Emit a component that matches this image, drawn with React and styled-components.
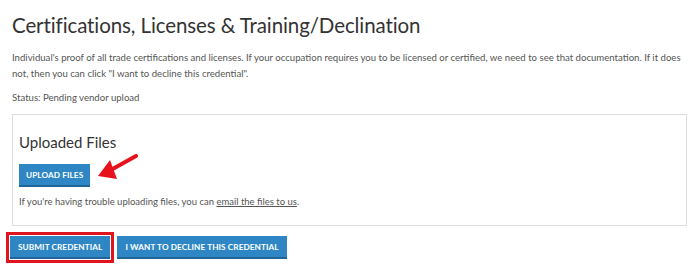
import React from "react";
import styled, { createGlobalStyle } from "styled-components";

const Global = createGlobalStyle`
  html, body { margin: 0; padding: 0; background: #fff; }
  body { font-family: "Lato", "Noto Sans", sans-serif; color: #444; }
`;

const Page = styled.div`
  width: 689px;
  height: 268px;
  box-sizing: border-box;
  padding: 12px 0 0 12px;
  overflow: hidden;
`;

const Title = styled.h1`
  margin: 0;
  font-size: 20.5px;
  font-weight: 400;
  color: #333;
  line-height: 26px;
  letter-spacing: -0.1px;
`;

const Para = styled.p`
  margin: ${(p) => p.$mt || 0}px 0 0;
  font-size: 9.6px;
  line-height: 16px;
  color: #555;
  letter-spacing: 0;
`;

const Panel = styled.section`
  margin-top: 8px;
  border: 1px solid #ddd;
  padding: 16px 6px 12px;
  height: 112px;
  box-sizing: border-box;
  width: 675px;
`;

const PanelTitle = styled.h2`
  margin: 0;
  font-size: 15px;
  font-weight: 400;
  color: #333;
  line-height: 22px;
`;

const UploadRow = styled.div`
  position: relative;
  margin-top: 11px;
  display: flex;
  align-items: center;
`;

const Button = styled.button`
  font-family: "Lato", "Noto Sans", sans-serif;
  background: #2e87c4;
  color: #fff;
  border: none;
  border-bottom: 2px solid #1f6598;
  font-size: 8.2px;
  font-weight: 700;
  letter-spacing: 0.1px;
  text-transform: uppercase;
  height: 23px;
  padding: 0 ${(p) => p.$px || 8}px;
  cursor: pointer;
  box-sizing: border-box;
`;

const Arrow = styled.svg`
  position: absolute;
  left: 76px;
  top: -10px;
`;

const Help = styled.p`
  margin: 9px 0 0;
  font-size: 9.5px;
  color: #555;
`;

const Link = styled.a`
  color: #555;
  text-decoration: underline;
`;

const Actions = styled.div`
  margin-top: 10px;
  display: flex;
  gap: 7px;
  align-items: center;
`;

const Highlight = styled.div`
  position: relative;
  display: flex;
  margin-left: -2px;
  &::after {
    content: "";
    position: absolute;
    left: -4px;
    top: -4px;
    right: -4px;
    bottom: -4px;
    border: 3px solid #e0141e;
    pointer-events: none;
  }
`;

export default function App() {
  return (
    <Page>
      <Global />
      <Title>Certifications, Licenses &amp; Training/Declination</Title>
      <Para $mt={12}>
        Individual's proof of all trade certifications and licenses. If your occupation requires you to be licensed or certified, we need to see that documentation. If it does not, then you can click "I want to decline this credential".
      </Para>
      <Para $mt={8}>Status: Pending vendor upload</Para>
      <Panel>
        <PanelTitle>Uploaded Files</PanelTitle>
        <UploadRow>
          <Button $px={7}>Upload Files</Button>
          <Arrow width="44" height="30" viewBox="0 0 44 30">
            <path d="M41 2 L14 17" stroke="#e8121c" strokeWidth="4" strokeLinecap="round" fill="none" />
            <path d="M3 22 L15 6 L22 25 Z" fill="#e8121c" />
          </Arrow>
        </UploadRow>
        <Help>
          If you're having trouble uploading files, you can <Link href="#">email the files to us</Link>.
        </Help>
      </Panel>
      <Actions>
        <Highlight>
          <Button>Submit Credential</Button>
        </Highlight>
        <Button>I want to decline this credential</Button>
      </Actions>
    </Page>
  );
}
